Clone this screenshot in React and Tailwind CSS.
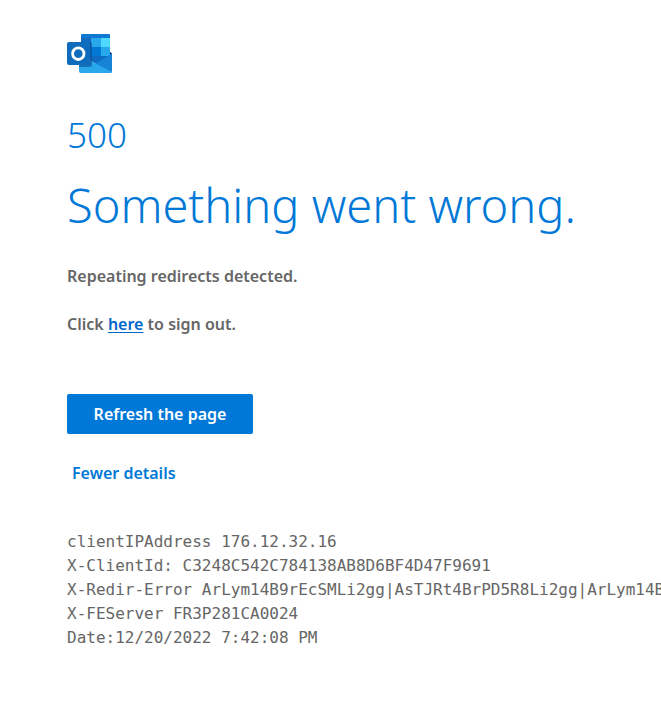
function OutlookLogo() {
  return (
    <svg viewBox="0 0 46 42" className="h-[42px] w-[46px]" role="img" aria-label="Outlook">
      <path d="M42 19l3 2.500L43 27H14v-7z" fill="#0a2767" />
      <path d="M14 10V3.500A1.500 1.500 0 0 1 15.500 2h26A1.500 1.500 0 0 1 43 3.500V24l-13 8-16-8z" fill="#0f6cc0" />
      <path d="M14 10V3.500A1.500 1.500 0 0 1 15.500 2h26A1.500 1.500 0 0 1 43 3.500V6H14z" fill="#0f78d0" />
      <rect x="24" y="6" width="10" height="9" fill="#28a8ea" />
      <rect x="34" y="6" width="9" height="9" fill="#50d9ff" />
      <rect x="24" y="15" width="10" height="9" fill="#0078d4" />
      <rect x="34" y="15" width="9" height="9" fill="#28a8ea" />
      <path d="M24 24h19l-13 8-6-3z" fill="#0f6cc0" />
      <path d="M45 21.500V39a2 2 0 0 1-2 2H25l3-9z" fill="#1784d8" />
      <path d="M12 23l33 17a2 2 0 0 1-2 1H14a2 2 0 0 1-2-2z" fill="#28a8ea" />
      <path d="M14 10h9.500a1.500 1.500 0 0 1 1.500 1.500V33a2 2 0 0 1-2 2H12v-8z" fill="#0a4c94" opacity=".6" />
      <rect x="0" y="10" width="23" height="23" rx="2" fill="#0f6cbd" />
      <ellipse cx="11.300" cy="21.700" rx="5.700" ry="5.800" fill="none" stroke="#fff" strokeWidth="2.800" />
    </svg>
  );
}

const details = [
  "clientIPAddress 176.12.32.16",
  "X-ClientId: C3248C542C784138AB8D6BF4D47F9691",
  "X-Redir-Error ArLym14B9rEcSMLi2gg|AsTJRt4BrPD5R8Li2gg|ArLym14B9rEcSMLi2gg",
  "X-FEServer FR3P281CA0024",
  "Date:12/20/2022 7:42:08 PM",
];

export default function App() {
  return (
    <main className="min-h-screen overflow-hidden bg-white pt-8 pl-[67px] font-['Noto_Sans','Open_Sans',sans-serif] text-[#666666]">
      <OutlookLogo />
      <h1 className="font-light text-[#0078d7]">
        <span className="mt-9 block text-[35px] leading-[50px]">500</span>
        <span className="mt-3 block text-[47px] leading-[66px] whitespace-nowrap">Something went wrong.</span>
      </h1>
      <div className="mt-[26px] text-[16px] leading-6 font-semibold">
        <p>Repeating redirects detected.</p>
        <p className="mt-6">
          Click <a href="#signout" className="text-[#0066cc] underline underline-offset-2">here</a> to sign out.
        </p>
      </div>
      <button type="button" className="mt-[58px] block h-10 w-[186px] rounded-xs bg-[#0078d7] text-[16px] font-semibold text-white">
        Refresh the page
      </button>
      <button type="button" className="mt-[27px] ml-[5px] block text-[16px] leading-6 font-semibold text-[#0078d7]">
        Fewer details
      </button>
      <div className="mt-[45px] font-['DejaVu_Sans_Mono',monospace] text-[16px] leading-6 whitespace-nowrap">
        {details.map((line) => (
          <p key={line}>{line}</p>
        ))}
      </div>
    </main>
  );
}
